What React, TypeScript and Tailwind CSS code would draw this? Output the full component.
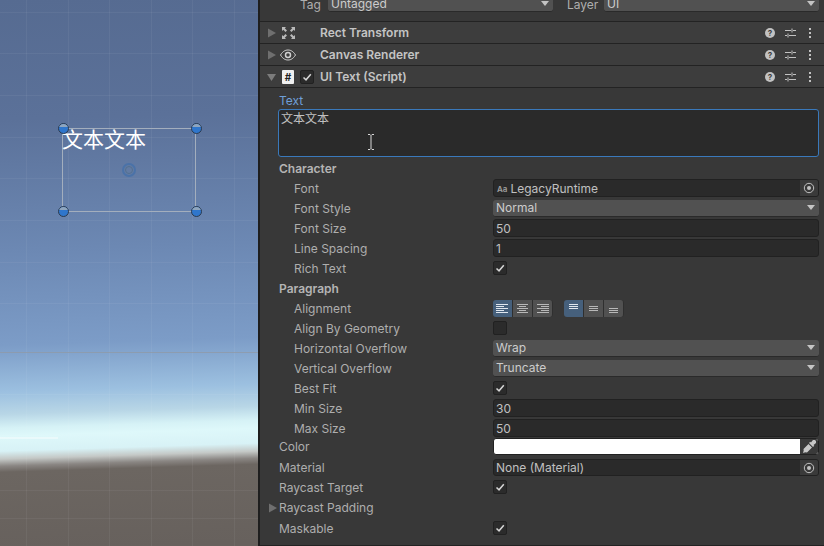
import type { ReactNode } from "react";

const cjk = { fontFamily: "'Noto Sans CJK SC', sans-serif" };

function Caret({ open = false }: { open?: boolean }) {
  return (
    <svg width="10" height="10" viewBox="0 0 10 10" className="shrink-0">
      {open ? <path d="M0 2h9L4.5 9z" fill="#7c7c7c" /> : <path d="M1 .5l8 4.5-8 4.5z" fill="#6f6f6f" />}
    </svg>
  );
}

function Check() {
  return (
    <div className="flex h-[14px] w-[14px] items-center justify-center rounded-[2px] border border-[#212121] bg-[#2b2b2b]">
      <svg width="10" height="10" viewBox="0 0 10 10">
        <path d="M1.5 5.5 4 7.8 8.8 2.2" fill="none" stroke="#d6d6d6" strokeWidth="1.5" />
      </svg>
    </div>
  );
}

function HeaderTools() {
  return (
    <div className="ml-auto mr-[10px] flex items-center">
      <div className="flex h-[10px] w-[10px] items-center justify-center rounded-full bg-[#c2c2c2] text-[8px] font-bold leading-none text-[#3c3c3c]">?</div>
      <svg width="11" height="10" viewBox="0 0 11 10" className="ml-[10px]">
        <path d="M0 2.5h6M8 2.5h3M0 7.5h2M4 7.5h7M7 .5v4M3 5.5v4" stroke="#c2c2c2" strokeWidth="1" fill="none" />
      </svg>
      <svg width="8" height="10" viewBox="0 0 8 10" className="ml-[10px]">
        <rect x="3" y="0" width="2" height="2" fill="#c2c2c2" />
        <rect x="3" y="4" width="2" height="2" fill="#c2c2c2" />
        <rect x="3" y="8" width="2" height="2" fill="#c2c2c2" />
      </svg>
    </div>
  );
}

function ComponentHeader({ icon, open, title, tick }: { icon: ReactNode; open?: boolean; title: string; tick?: boolean }) {
  return (
    <div className="flex h-[22px] shrink-0 items-center border-b border-[#232323] bg-[#3d3d3d] pl-[7px]">
      <Caret open={open} />
      <div className="ml-[3px] flex w-[16px] justify-center">{icon}</div>
      <div className="ml-[4px] flex w-[14px] justify-center">{tick && <Check />}</div>
      <span className="ml-[6px] text-[12px] font-semibold text-[#c4c4c4]">{title}</span>
      <HeaderTools />
    </div>
  );
}

function Row({ label, indent, caret, children, h = "h-5" }: { label: string; indent?: boolean; caret?: boolean; children?: ReactNode; h?: string }) {
  return (
    <div className={h + " flex shrink-0 items-center pr-[5px]"}>
      <div className={(indent ? "pl-[34px]" : caret ? "pl-[8px]" : "pl-[19px]") + " flex w-[233px] shrink-0 items-center pt-px text-[12px] text-[#aeaeae]"}>
        {caret && <span className="mr-[1px]"><Caret /></span>}
        {label}
      </div>
      <div className="min-w-0 flex-1">{children}</div>
    </div>
  );
}

function Input({ value }: { value: string }) {
  return (
    <div className="flex h-[18px] items-center rounded-[3px] border border-[#212121] bg-[#2a2a2a] pl-[2px] pt-px text-[12px] text-[#c0c0c0]">{value}</div>
  );
}

function Arrow() {
  return (
    <svg width="10" height="6" viewBox="0 0 10 6">
      <path d="M1 0h8L5 5z" fill="#c4c4c4" />
    </svg>
  );
}

function Select({ value }: { value: string }) {
  return (
    <div className="flex h-[17px] items-center justify-between rounded-[3px] border-b border-[#2a2a2a] bg-[#515151] pl-[3px] pr-[3px] text-[12px] text-[#cccccc]">
      {value}
      <Arrow />
    </div>
  );
}

function Target() {
  return (
    <div className="flex h-full w-[18px] items-center justify-center bg-[#3a3a3a]">
      <svg width="12" height="12" viewBox="0 0 12 12">
        <circle cx="6" cy="6" r="4.7" fill="none" stroke="#c2c2c2" strokeWidth="1" />
        <circle cx="6" cy="6" r="2" fill="#c2c2c2" />
      </svg>
    </div>
  );
}

function ObjectField({ children, h = "h-[18px]" }: { children: ReactNode; h?: string }) {
  return (
    <div className={h + " flex items-center overflow-hidden rounded-[3px] border border-[#212121] bg-[#2a2a2a] text-[12px] text-[#c0c0c0]"}>
      <div className="flex flex-1 items-center pl-[2px] pt-px">{children}</div>
      <Target />
    </div>
  );
}

function AlignButton({ active, d, left, right }: { active?: boolean; d: string; left?: boolean; right?: boolean }) {
  return (
    <div className={(active ? "bg-[#46607c] " : "bg-[#515151] ") + (left ? "rounded-l-[3px] " : "") + (right ? "rounded-r-[3px] " : "") + "flex h-[17px] w-[20px] items-center justify-center border-r border-[#2f2f2f]"}>
      <svg width="13" height="11" viewBox="0 0 13 11">
        <path d={d} stroke={active ? "#dfe6ee" : "#b8b8b8"} strokeWidth="1" fill="none" />
      </svg>
    </div>
  );
}

function Handle({ className }: { className: string }) {
  return (
    <div className={"absolute h-[11px] w-[11px] overflow-hidden rounded-full border border-[#2b3a4e] bg-[#2f76cc] " + className}>
      <div className="h-[3px] bg-[#8fa5bd]" />
    </div>
  );
}

export default function App() {
  return (
    <div className="flex h-[546px] w-[824px] overflow-hidden bg-[#383838] font-['Inter',sans-serif]">
      <div className="relative h-full w-[258px] shrink-0 overflow-hidden bg-[linear-gradient(178.2deg,#566b91_0px,#5b7199_120px,#6c88b3_250px,#7c9cc7_345px,#9cc0e0_392px,#b8d6e6_414px,#d6f2f6_428px,#def8fa_436px,#d8f2f6_451px,#c4c8c6_459px,#8a8683_466px,#6c6661_472px,#67615d_550px)]">
        <svg width="258" height="546" className="absolute inset-0">
          <g stroke="#ffffff" strokeOpacity="0.05">
            {[26, 68, 109, 151, 192, 234].map((x) => <path key={x} d={"M" + (x + 0.5) + " 0V546"} />)}
            {[12, 53, 95, 137, 178, 220, 262, 303, 394, 435, 490, 518].map((y) => <path key={y} d={"M0 " + (y + 0.5) + "H258"} />)}
          </g>
          <path d="M0 352.5H258" stroke="#8f9aa8" strokeOpacity="0.8" />
          <path d="M0 438H58" stroke="#ffffff" strokeOpacity="0.4" strokeWidth="2" />
        </svg>
        <div className="absolute left-[62px] top-[128px] h-[84px] w-[134px] border border-[#a3aebd]" />
        <div className="absolute left-[122px] top-[163px] flex h-[14px] w-[14px] items-center justify-center rounded-full border-2 border-[#4a72a8]">
          <div className="h-[8px] w-[8px] rounded-full border border-[#52708f]" />
        </div>
        <span className="absolute left-[62px] top-[124px] text-[21px] leading-[28px] text-white" style={cjk}>文本文本</span>
        <Handle className="left-[58px] top-[123px]" />
        <Handle className="left-[191px] top-[123px]" />
        <Handle className="left-[58px] top-[206px]" />
        <Handle className="left-[191px] top-[206px]" />
      </div>

      <div className="h-full w-[2px] shrink-0 bg-[#1e1e1e]" />

      <div className="relative flex min-w-0 flex-1 flex-col overflow-hidden">
        <div className="flex h-[22px] shrink-0 items-end border-b border-[#232323] pb-[7px] text-[12px] text-[#aeaeae]">
          <span className="ml-[40px] w-[28px]">Tag</span>
          <div className="mb-[2px] flex h-[20px] w-[225px] items-center justify-between rounded-[3px] border-b border-[#2a2a2a] bg-[#515151] px-[3px] pt-[5px] text-[#cccccc]">
            Untagged
            <Arrow />
          </div>
          <span className="ml-[14px] w-[37px]">Layer</span>
          <div className="mb-[2px] flex h-[20px] w-[215px] items-center justify-between rounded-[3px] border-b border-[#2a2a2a] bg-[#515151] px-[3px] pt-[5px] text-[#cccccc]">
            UI
            <Arrow />
          </div>
        </div>

        <ComponentHeader
          title="Rect Transform"
          icon={
            <svg width="13" height="12" viewBox="0 0 13 12" fill="#b9b9b9">
              <path d="M0 0h4L2.8 1.3 5 3.5 3.5 5 1.3 2.8 0 4zM13 0v4l-1.3-1.2L9.5 5 8 3.5l2.2-2.2L9 0zM0 12V8l1.3 1.2L3.5 7 5 8.5 2.8 10.7 4 12zM13 12H9l1.2-1.3L8 8.5 9.5 7l2.2 2.2L13 8z" />
            </svg>
          }
        />
        <ComponentHeader
          title="Canvas Renderer"
          icon={
            <svg width="16" height="12" viewBox="0 0 16 12" fill="none" stroke="#d0d0d0" strokeWidth="1">
              <path d="M.5 6C3 2 5.5 1 8 1s5 1 7.5 5C13 10 10.5 11 8 11S3 10 .5 6z" />
              <circle cx="8" cy="6" r="2.5" strokeWidth="1.5" />
            </svg>
          }
        />
        <ComponentHeader
          open
          tick
          title="UI Text (Script)"
          icon={
            <div className="flex h-[14px] w-[12px] items-center justify-center rounded-[1px] bg-[#f0f0f0] text-[10px] font-bold leading-none text-[#222222]">#</div>
          }
        />

        <div className="mb-px pl-[19px] pt-[5px] text-[12px] leading-[15px] text-[#6f9fd8]">Text</div>
        <div className="ml-[18px] mr-[5px] h-[48px] shrink-0 rounded-[3px] border border-[#3a79bb] bg-[#2a2a2a] pl-[2px] text-[12px] leading-[15px] text-[#c0c0c0]" style={cjk}>
          文本文本
        </div>
        <svg width="8" height="16" viewBox="0 0 8 16" className="absolute left-[107px] top-[134px]">
          <path d="M1 .5h2l1 1 1-1h2M4 1.5v13M1 15.5h2l1-1 1 1h2" fill="none" stroke="#d8d8d8" />
        </svg>

        <div className="flex h-[21px] shrink-0 items-center pl-[19px] pt-[2px] text-[12px] font-semibold text-[#b4b4b4]">Character</div>
        <Row indent label="Font">
          <ObjectField>
            <span className="ml-px mr-[3px] text-[8px] font-semibold text-[#a0a0a0]">Aa</span>LegacyRuntime
          </ObjectField>
        </Row>
        <Row indent label="Font Style"><Select value="Normal" /></Row>
        <Row indent label="Font Size"><Input value="50" /></Row>
        <Row indent label="Line Spacing"><Input value="1" /></Row>
        <Row indent label="Rich Text"><Check /></Row>
        <div className="flex h-[20px] shrink-0 items-center pl-[19px] pt-px text-[12px] font-semibold text-[#b4b4b4]">Paragraph</div>
        <Row indent label="Alignment">
          <div className="flex items-center">
            <AlignButton active left d="M0 1.5h12M0 3.5h8M0 5.5h12M0 7.5h8M0 9.5h12" />
            <AlignButton d="M1 1.5h11M3 3.5h7M1 5.5h11M3 7.5h7M1 9.5h11" />
            <AlignButton right d="M1 1.5h12M5 3.5h8M1 5.5h12M5 7.5h8M1 9.5h12" />
            <div className="w-[11px]" />
            <AlignButton active left d="M2 1.5h9M2 3.5h9M2 5.5h9" />
            <AlignButton d="M2 3.5h9M2 5.5h9M2 7.5h9" />
            <AlignButton right d="M2 5.5h9M2 7.5h9M2 9.5h9" />
          </div>
        </Row>
        <Row indent label="Align By Geometry">
          <div className="h-[14px] w-[14px] rounded-[2px] border border-[#212121] bg-[#2b2b2b]" />
        </Row>
        <Row indent label="Horizontal Overflow"><Select value="Wrap" /></Row>
        <Row indent label="Vertical Overflow"><Select value="Truncate" /></Row>
        <Row indent label="Best Fit"><Check /></Row>
        <Row indent label="Min Size"><Input value="30" /></Row>
        <Row indent label="Max Size"><Input value="50" /></Row>
        <Row label="Color" h="h-[17px]">
          <div className="flex h-[17px] items-center overflow-hidden rounded-[3px] border border-[#212121] bg-white">
            <div className="flex-1" />
            <div className="flex h-full w-[18px] items-center justify-center bg-[#3a3a3a]">
              <svg width="13" height="13" viewBox="0 0 13 13" fill="#c8c8c8">
                <path d="M9.5 .5a2 2 0 0 1 3 3l-2 1.5.8.8-1.3 1.2-4-4L7.2 1.8l.8.8z" />
                <path d="M5.5 4 9 7.500 4 12.500l-2-.2-1.300.7-.7-.7.7-1.300L.5 9z" />
              </svg>
            </div>
          </div>
        </Row>
        <div className="h-[3px] shrink-0" />
        <Row label="Material" h="h-[19px]"><ObjectField h="h-[17px]">None (Material)</ObjectField></Row>
        <Row label="Raycast Target"><Check /></Row>
        <Row caret label="Raycast Padding" />
        <Row label="Maskable" h="h-[22px]"><Check /></Row>
        <div className="mt-auto h-px shrink-0 bg-[#232323]" />
      </div>
    </div>
  );
}
